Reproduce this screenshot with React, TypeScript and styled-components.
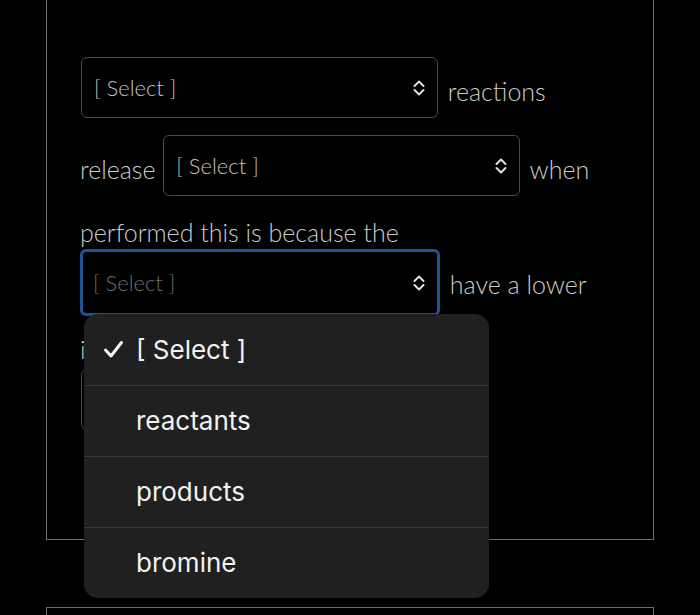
import styled, { createGlobalStyle } from "styled-components";

const GlobalStyle = createGlobalStyle`
    html, body {
        margin: 0;
        padding: 0;
        background: #000;
    }
    body {
        font-family: "Lato", "Open Sans", sans-serif;
        -webkit-font-smoothing: antialiased;
    }
`;

const Page = styled.div`
    width: 700px;
    height: 615px;
    overflow: hidden;
    background: #000;
`;

const Panel = styled.section`
    margin: -1px 46px 0;
    border: 1px solid #6c6c6c;
    padding: 40px 52px 92px 33px;
`;

const NextPanel = styled.section`
    margin: 67px 46px 0;
    height: 120px;
    border: 1px solid #6c6c6c;
`;

const Prompt = styled.div`
    font-size: 25px;
    font-weight: 300;
    line-height: 39px;
    color: #cbcbcb;
    padding-top: 17px;
`;

const Field = styled.span<{ $open?: boolean }>`
    position: relative;
    display: inline-flex;
    align-items: center;
    justify-content: space-between;
    box-sizing: border-box;
    width: ${p => (p.$open ? "360px" : "357px")};
    height: ${p => (p.$open ? "67px" : "61px")};
    padding: 0 11px 0 ${p => (p.$open ? "10px" : "12px")};
    margin: ${p => (p.$open ? "-3px 3px 14px 0" : "0 3px 17px 1px")};
    border: ${p => (p.$open ? "3px solid #1d5496" : "1px solid #4b4b4b")};
    border-radius: 6px;
    background: #000;
    vertical-align: ${p => (p.$open ? "3px" : "5px")};
    font-size: 22px;
    font-weight: 300;
    line-height: 1;
    color: ${p => (p.$open ? "#6e6e6e" : "#c2c2c2")};
`;

const Arrows = styled.svg`
    flex: none;
    width: 14px;
    height: 18px;
`;

const Menu = styled.ul`
    position: absolute;
    top: 62px;
    left: 1px;
    z-index: 5;
    width: 405px;
    margin: 0;
    padding: 0;
    list-style: none;
    background: #202020;
    border-radius: 14px;
    overflow: hidden;
    font-family: "Inter", "Roboto", sans-serif;
    font-size: 26px;
    font-weight: 400;
    color: #f2f2f2;
`;

const Option = styled.li`
    position: relative;
    display: flex;
    align-items: center;
    height: 71px;
    padding-left: 52px;
    box-sizing: border-box;
    & + & {
        border-top: 1px solid #3a3a3a;
    }
`;

const Check = styled.svg`
    position: absolute;
    left: 19px;
    top: 50%;
    width: 21px;
    height: 19px;
    margin-top: -10px;
`;

const Chevrons = () => (
    <Arrows viewBox="0 0 14 18">
        <path d="M2.5 7 L7 2.5 L11.5 7" fill="none" stroke="#e0e0e0" strokeWidth="2" strokeLinecap="round" strokeLinejoin="round" />
        <path d="M2.5 11 L7 15.5 L11.5 11" fill="none" stroke="#e0e0e0" strokeWidth="2" strokeLinecap="round" strokeLinejoin="round" />
    </Arrows>
);

const options = ["[ Select ]", "reactants", "products", "bromine"];

function Dropdown({ open, selected = 0 }: { open?: boolean; selected?: number }) {
    return (
        <Field $open={open}>
            <span>[ Select ]</span>
            <Chevrons />
            {open && (
                <Menu>
                    {options.map((o, i) => (
                        <Option key={o}>
                            {i === selected && (
                                <Check viewBox="0 0 21 19">
                                    <path d="M2.5 10 L8 16 L18.5 2.5" fill="none" stroke="#f4f4f4" strokeWidth="3" strokeLinecap="round" strokeLinejoin="round" />
                                </Check>
                            )}
                            {o}
                        </Option>
                    ))}
                </Menu>
            )}
        </Field>
    );
}

export default function App() {
    return (
        <Page>
            <GlobalStyle />
            <Panel>
                <Prompt>
                    <Dropdown /> reactions release <Dropdown /> when performed this is because the{" "}
                    <Dropdown open /> have a lower internal energy than the <Dropdown />.
                </Prompt>
            </Panel>
            <NextPanel />
        </Page>
    );
}
